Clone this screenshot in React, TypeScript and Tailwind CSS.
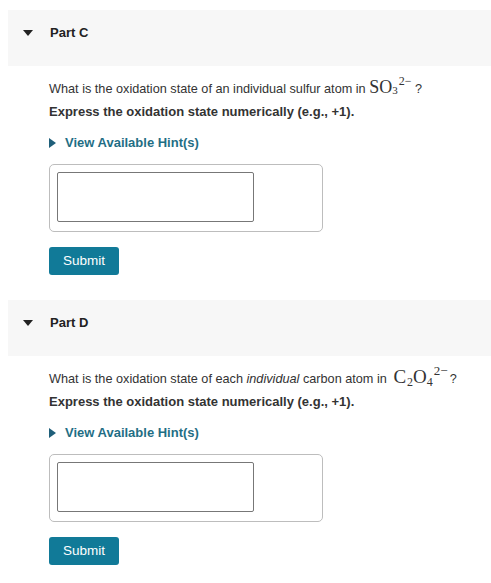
import React from "react";

function Caret({ className = "" }: { className?: string }) {
  return (
    <svg width="10" height="6" viewBox="0 0 10 6" className={className}>
      <path d="M0 0 L10 0 L5 6 Z" fill="#222" />
    </svg>
  );
}

function HintArrow() {
  return (
    <svg width="7" height="10" viewBox="0 0 7 10">
      <path d="M0 0 L7 5 L0 10 Z" fill="#1f5f7a" />
    </svg>
  );
}

const mathFont = { fontFamily: '"Liberation Serif", "Times New Roman", serif' };

function Part({
  label,
  question,
}: {
  label: string;
  question: React.ReactNode;
}) {
  return (
    <div>
      <div className="h-[56px] bg-[#f7f7f7] flex items-start pt-[14px] pl-[15px]">
        <div className="flex items-center h-[18px]">
          <Caret />
          <span className="ml-[17px] text-[13px] leading-[18px] font-bold text-[#222]">{label}</span>
        </div>
      </div>
      <div className="pl-[41px] pt-[12px]">
        <div className="text-[12.7px] leading-[18px] text-[#333] h-[18px] whitespace-nowrap">{question}</div>
        <div className="mt-[7px] text-[13px] leading-[18px] font-bold text-[#333]">
          Express the oxidation state numerically (e.g., +1).
        </div>
        <div className="mt-[13px] flex items-center h-[18px]">
          <HintArrow />
          <span className="ml-[9px] text-[13px] font-bold text-[#1f6e85]">View Available Hint(s)</span>
        </div>
        <div className="mt-[12px] w-[274px] h-[68px] border border-[#bdbdbd] rounded-[5px] p-[7px]">
          <div className="w-[197px] h-[50px] border border-[#777] rounded-[2px] bg-white" />
        </div>
        <button className="mt-[15px] w-[70px] h-[28px] bg-[#117a98] rounded-[3px] text-white text-[13.5px] flex items-center justify-center">
          Submit
        </button>
      </div>
    </div>
  );
}

export default function App() {
  return (
    <div
      className="bg-white w-[491px] h-[583px] pl-[8px] pt-[10px]"
      style={{ fontFamily: '"Liberation Sans", Arial, sans-serif' }}
    >
      <Part
        label="Part C"
        question={
          <span>
            What is the oxidation state of an individual sulfur atom in{" "}
            <span style={mathFont} className="text-[18px]">
              SO<sub className="text-[11px] relative top-[1px] align-baseline">3</sub>
              <sup className="text-[12px] relative -top-[8px] align-baseline ml-[1px]">2−</sup>
            </span>{" "}
            ?
          </span>
        }
      />
      <div className="h-[25px]" />
      <Part
        label="Part D"
        question={
          <span>
            What is the oxidation state of each <i>individual</i> carbon atom in{" "}
            <span style={mathFont} className="text-[19px] ml-[3px]">
              C<sub className="text-[12px] relative top-[3px] align-baseline ml-[1px]">2</sub>O
              <sub className="text-[12px] relative top-[3px] align-baseline">4</sub>
              <sup className="text-[13px] relative -top-[8px] align-baseline ml-[1px]">2−</sup>
            </span>
            <span className="ml-[2px]">?</span>
          </span>
        }
      />
    </div>
  );
}
